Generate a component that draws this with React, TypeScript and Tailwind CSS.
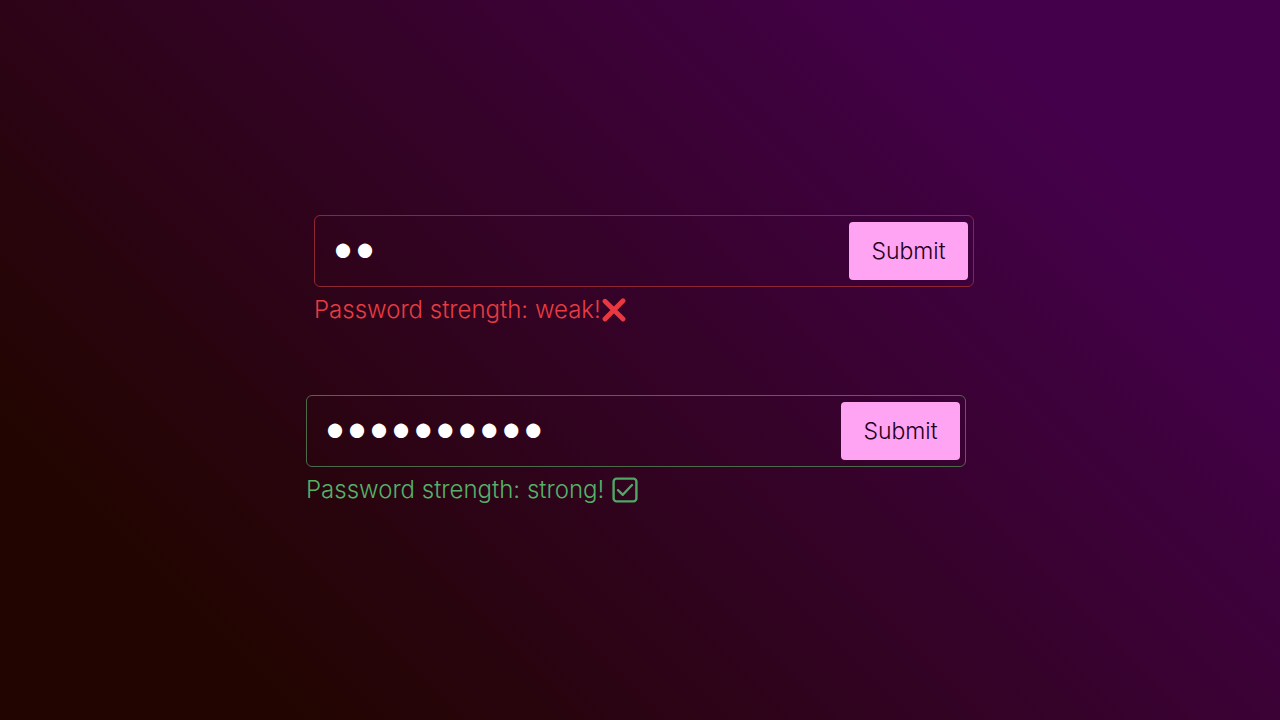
import { useState } from "react";

function CrossIcon() {
  return (
    <svg viewBox="0 0 24 24" className="ml-px size-6" fill="none" stroke="#e9383f" strokeWidth="4.8" strokeLinecap="round" aria-hidden="true">
      <path d="M3 3.2 21 21M21 2.8 3 21" />
    </svg>
  );
}

function CheckIcon() {
  return (
    <svg viewBox="0 0 26 26" className="ml-2 size-[26px]" fill="none" stroke="#4fa863" strokeWidth="2.4" strokeLinecap="round" strokeLinejoin="round" aria-hidden="true">
      <rect x="1.6" y="1.6" width="22.8" height="22.8" rx="3" />
      <path d="m6 13.2 4.8 4.6L20 8" />
    </svg>
  );
}

type FieldProps = { id: string; initial: string; strong: boolean };

function PasswordField({ id, initial, strong }: FieldProps) {
  const [value, setValue] = useState(initial);
  return (
    <form
      onSubmit={(e) => e.preventDefault()}
      className={strong ? "w-full max-w-[660px] self-start" : "w-full max-w-[660px] self-end"}
    >
      <div
        className={
          strong
            ? "flex h-[72px] items-stretch rounded-md border border-[#4b6b4b] px-[5px] py-[6px]"
            : "flex h-[72px] items-stretch rounded-md border border-[#8f2634] px-[5px] py-[6px]"
        }
      >
        <input
          id={id}
          type="password"
          aria-label="Password"
          aria-describedby={id + "-status"}
          value={value}
          onChange={(e) => setValue(e.target.value)}
          className="min-w-0 flex-1 bg-transparent px-3 pb-[7px] font-['Lato',sans-serif] text-[38px] font-normal text-white outline-none"
        />
        <button type="submit" className="w-[119px] shrink-0 rounded bg-[#ffa3f3] text-[23px] font-light text-[#24001c]">
          Submit
        </button>
      </div>
      <p
        id={id + "-status"}
        className={
          strong
            ? "mt-2 flex items-center text-2xl leading-[30px] text-[#53b268]"
            : "mt-2 flex items-center text-2xl leading-[30px] text-[#e63c42]"
        }
      >
        <span>{strong ? "Password strength: strong!" : "Password strength: weak!"}</span>
        {strong ? <CheckIcon /> : <CrossIcon />}
      </p>
    </form>
  );
}

export default function App() {
  return (
    <main className="flex min-h-screen flex-col items-center justify-center bg-[linear-gradient(45deg,#220500_15%,#45004c_85%)] font-['Inter',sans-serif] font-light">
      <div className="flex w-full max-w-[668px] flex-col gap-[70px]">
        <PasswordField id="weak" initial="ab" strong={false} />
        <PasswordField id="strong" initial="Tr0ub4dor&" strong />
      </div>
    </main>
  );
}
